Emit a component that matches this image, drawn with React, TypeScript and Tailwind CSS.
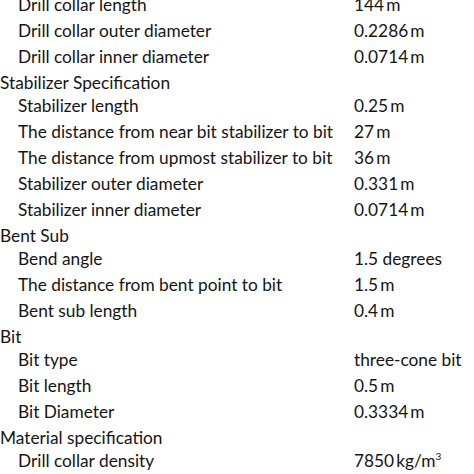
type Row = { label: string; value?: React.ReactNode; header?: boolean };

const rows: Row[] = [
  { label: 'Drill collar length', value: <>144&#8201;m</> },
  { label: 'Drill collar outer diameter', value: <>0.2286&#8201;m</> },
  { label: 'Drill collar inner diameter', value: <>0.0714&#8201;m</> },
  { label: 'Stabilizer Specification', header: true },
  { label: 'Stabilizer length', value: <>0.25&#8201;m</> },
  { label: 'The distance from near bit stabilizer to bit', value: <>27&#8201;m</> },
  { label: 'The distance from upmost stabilizer to bit', value: <>36&#8201;m</> },
  { label: 'Stabilizer outer diameter', value: <>0.331&#8201;m</> },
  { label: 'Stabilizer inner diameter', value: <>0.0714&#8201;m</> },
  { label: 'Bent Sub', header: true },
  { label: 'Bend angle', value: '1.5 degrees' },
  { label: 'The distance from bent point to bit', value: <>1.5&#8201;m</> },
  { label: 'Bent sub length', value: <>0.4&#8201;m</> },
  { label: 'Bit', header: true },
  { label: 'Bit type', value: 'three-cone bit' },
  { label: 'Bit length', value: <>0.5&#8201;m</> },
  { label: 'Bit Diameter', value: <>0.3334&#8201;m</> },
  { label: 'Material specification', header: true },
  {
    label: 'Drill collar density',
    value: (
      <>
        7850&#8201;kg/m<sup className="text-[10px] -top-[7px]">3</sup>
      </>
    ),
  },
];

export default function App() {
  return (
    <div
      className="w-[474px] h-[474px] overflow-hidden bg-white text-[#151515] text-[17.3px]"
      style={{ fontFamily: 'Lato, "Open Sans", sans-serif' }}
    >
      <div className="-mt-[8px] flex flex-col">
        {rows.map((r) =>
          r.header ? (
            <div key={r.label} className="h-[23px] pt-[3px] leading-[20px] whitespace-nowrap">
              {r.label}
            </div>
          ) : (
            <div key={r.label} className="flex h-[26px] leading-[26px] whitespace-nowrap">
              <div className="w-[354px] pl-[18px]">{r.label}</div>
              <div>{r.value}</div>
            </div>
          )
        )}
      </div>
    </div>
  );
}
